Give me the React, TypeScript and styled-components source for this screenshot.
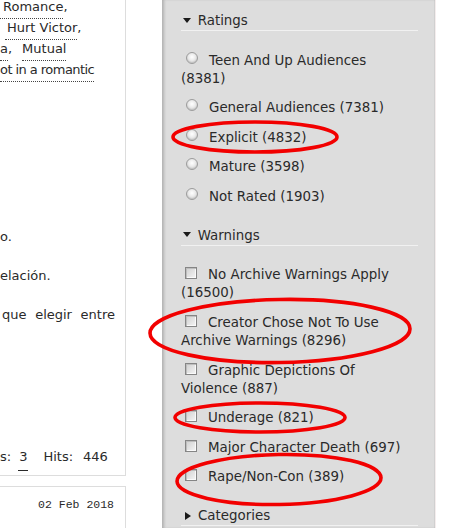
import React from "react";
import styled, { createGlobalStyle, css } from "styled-components";

const Global = createGlobalStyle`
  html, body { margin: 0; padding: 0; background: #fff; }
  body { width: 474px; height: 528px; overflow: hidden; font-family: "DejaVu Sans", Verdana, sans-serif; color: #2a2a2a; }
`;

const Page = styled.div`
  position: relative;
  display: flex;
  align-items: flex-start;
  gap: 36px;
  width: 474px;
  height: 528px;
  overflow: hidden;
`;

const LeftCol = styled.div`
  flex: none;
  width: 126px;
  height: 528px;
  display: flex;
  flex-direction: column;
  gap: 10px;
  font-size: 13px;
  line-height: 21px;
`;

const BlurbBox = styled.div`
  box-sizing: border-box;
  height: 476px;
  border-right: 1px solid #ddd;
  border-bottom: 1px solid #ddd;
  overflow: hidden;
  display: flex;
  flex-direction: column;
`;

const Blurb = styled.div`
  margin-top: -4px;
`;

const Line = styled.div<{ $indent?: number; $gap?: number; $tight?: boolean; $justify?: boolean }>`
  white-space: nowrap;
  padding-left: ${(p) => p.$indent ?? 0}px;
  margin-top: ${(p) => p.$gap ?? 0}px;
  ${(p) => p.$tight && css`letter-spacing: -0.55px;`}
  ${(p) =>
    p.$justify &&
    css`
      width: 113px;
      white-space: normal;
      text-align: justify;
      text-align-last: justify;
    `}
`;

const Tag = styled.a<{ $lead?: number; $space?: number }>`
  color: inherit;
  text-decoration: none;
  border-bottom: 1px dotted #444;
  padding-bottom: 3.5px;
  padding-left: ${(p) => p.$lead ?? 0}px;
  margin-left: ${(p) => p.$space ?? 0}px;
`;

const Stats = styled.div`
  margin-top: auto;
  padding-bottom: 4px;
  display: flex;
  align-items: baseline;
  white-space: nowrap;
`;

const StatText = styled.span<{ $ml?: number }>`
  margin-left: ${(p) => p.$ml ?? 0}px;
`;

const StatLink = styled.a<{ $ml?: number }>`
  color: inherit;
  text-decoration: none;
  border-bottom: 1px solid #2a2a2a;
  padding: 0 1px 3px;
  margin-left: ${(p) => p.$ml ?? 0}px;
`;

const DateBox = styled.div`
  flex: 1;
  border-top: 1px solid #ddd;
  border-right: 1px solid #ddd;
  padding: 11px 11px 0 0;
  text-align: right;
  font-family: "Liberation Mono", "Courier New", monospace;
  font-size: 11.5px;
  line-height: 14px;
  color: #2a2a2a;
`;

const Panel = styled.aside`
  flex: none;
  box-sizing: border-box;
  width: 273px;
  height: 528px;
  padding: 12px 17px 0 19px;
  background: #ddd;
  box-shadow: inset 3px 0 3px -1px rgba(0, 0, 0, 0.2), inset -1px 0 0 #d0d0d0, 1px 0 0 #f4eded;
  font-size: 13.4px;
  line-height: 18px;
  color: #2a2a2a;
`;

const Heading = styled.h3`
  margin: 0;
  display: flex;
  align-items: center;
  font-size: inherit;
  font-weight: normal;
  line-height: 18px;
  border-bottom: 1px solid #f1f1f1;
`;

const Arrow = styled.span<{ $open: boolean }>`
  display: inline-block;
  width: 0;
  height: 0;
  ${(p) =>
    p.$open
      ? css`
          border-left: 4px solid transparent;
          border-right: 4px solid transparent;
          border-top: 5px solid #1a1a1a;
          margin: 0 7px 2px 1.7px;
        `
      : css`
          border-top: 4.5px solid transparent;
          border-bottom: 4.5px solid transparent;
          border-left: 6px solid #1a1a1a;
          margin: 0 7px 0 4px;
        `}
`;

const List = styled.div`
  display: flex;
  flex-direction: column;
  gap: 11.6px;
  padding: 20.5px 6px 21px 0;
`;

const Option = styled.label`
  display: block;
  line-height: 18px;
`;

const Radio = styled.input.attrs({ type: "radio" })`
  appearance: none;
  display: inline-block;
  box-sizing: border-box;
  width: 12px;
  height: 12px;
  margin: 0 11px 0 5px;
  vertical-align: 1px;
  border-radius: 50%;
  border: 1px solid #9c9c9c;
  background: radial-gradient(circle at 50% 40%, #ffffff 0, #efefef 35%, #c9c9c9 100%);
  box-shadow: inset 0 -1px 1px rgba(0, 0, 0, 0.1);
`;

const Check = styled.input.attrs({ type: "checkbox" })`
  appearance: none;
  display: inline-block;
  box-sizing: border-box;
  width: 12px;
  height: 12px;
  margin: 0 11px 0 4px;
  vertical-align: 0;
  border: 1px solid #858585;
  background: linear-gradient(135deg, #cfcfcf 0%, #e4e4e4 55%, #f6f6f6 100%);
  box-shadow: inset 1px 1px 0 #bdbdbd, inset -1px -1px 0 #fafafa;
`;

const Overlay = styled.svg`
  position: absolute;
  left: 0;
  top: 0;
  pointer-events: none;
`;

type Item = { label: string };

const ratings: Item[] = [
  { label: "Teen And Up Audiences (8381)" },
  { label: "General Audiences (7381)" },
  { label: "Explicit (4832)" },
  { label: "Mature (3598)" },
  { label: "Not Rated (1903)" },
];

const warnings: Item[] = [
  { label: "No Archive Warnings Apply (16500)" },
  { label: "Creator Chose Not To Use Archive Warnings (8296)" },
  { label: "Graphic Depictions Of Violence (887)" },
  { label: "Underage (821)" },
  { label: "Major Character Death (697)" },
  { label: "Rape/Non-Con (389)" },
];

export default function App() {
  return (
    <>
      <Global />
      <Page>
        <LeftCol>
          <BlurbBox>
            <Blurb>
              <Line>
                <Tag $lead={3}>Romance</Tag>,
              </Line>
              <Line $indent={5}>
                <Tag $lead={2}>Hurt Victor</Tag>,
              </Line>
              <Line>
                <Tag>a</Tag>,<Tag $space={10}>Mutual</Tag>
              </Line>
              <Line $tight>
                <Tag>ot in a romantic</Tag>
              </Line>
              <Line $gap={146}>o.</Line>
              <Line $gap={18}>elación.</Line>
              <Line $gap={18} $indent={2} $justify>
                que elegir entre
              </Line>
            </Blurb>
            <Stats>
              <StatText>s:</StatText>
              <StatLink $ml={7}>3</StatLink>
              <StatText $ml={15}>Hits:</StatText>
              <StatText $ml={10}>446</StatText>
            </Stats>
          </BlurbBox>
          <DateBox>02 Feb 2018</DateBox>
        </LeftCol>

        <Panel>
          <Heading>
            <Arrow $open />
            Ratings
          </Heading>
          <List>
            {ratings.map((r) => (
              <Option key={r.label}>
                <Radio name="rating" />
                {r.label}
              </Option>
            ))}
          </List>
          <Heading>
            <Arrow $open />
            Warnings
          </Heading>
          <List>
            {warnings.map((w) => (
              <Option key={w.label}>
                <Check />
                {w.label}
              </Option>
            ))}
          </List>
          <Heading>
            <Arrow $open={false} />
            Categories
          </Heading>
        </Panel>

        <Overlay width={474} height={528} viewBox="0 0 474 528">
          <g fill="none" stroke="#f20000" strokeWidth={3.6}>
            <ellipse cx={255} cy={137} rx={82} ry={15} />
            <ellipse cx={280} cy={331} rx={130} ry={31.5} transform="rotate(-1 280 331)" />
            <ellipse cx={260} cy={417.5} rx={85} ry={14.5} />
            <ellipse cx={279} cy={479.5} rx={102} ry={25} transform="rotate(-1 279 479)" />
          </g>
        </Overlay>
      </Page>
    </>
  );
}
